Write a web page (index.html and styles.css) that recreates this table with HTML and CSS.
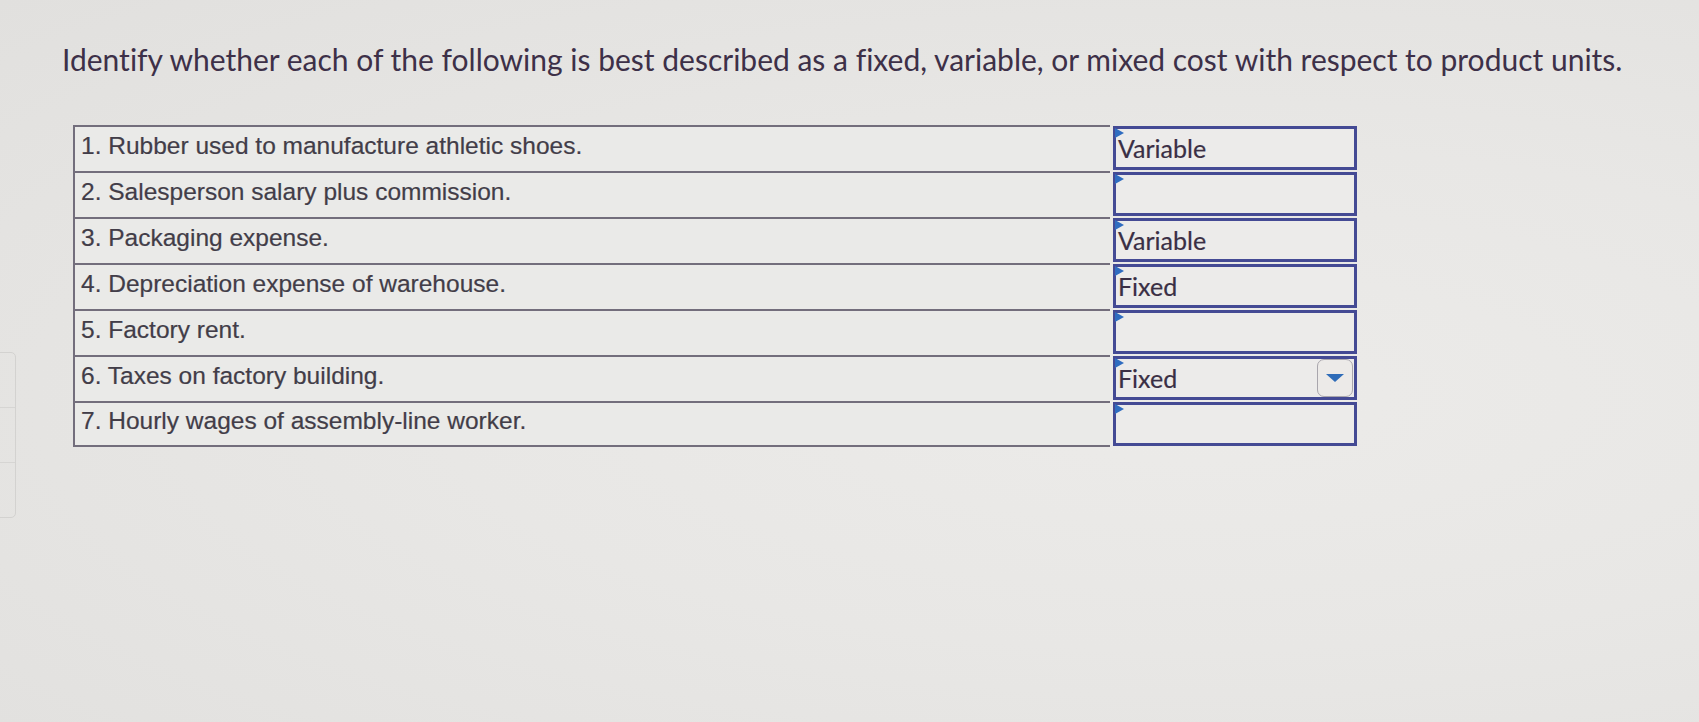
FILE: index.html
```html
<!DOCTYPE html>
<html lang="en">
<head>
<meta charset="utf-8">
<title>Cost behavior</title>
<link rel="stylesheet" href="styles.css">
</head>
<body>
<div class="edge-ghost">
  <div class="ghost-row"></div>
  <div class="ghost-row"></div>
  <div class="ghost-row"></div>
</div>
<main class="page">
  <p class="prompt">Identify whether each of the following is best described as a fixed, variable, or mixed cost with respect to product units.</p>
  <div class="grid">
    <div class="item">1. Rubber used to manufacture athletic shoes.</div>
    <div class="answer"><div class="box"><span class="flag"></span><span class="val">Variable</span></div></div>
    <div class="item">2. Salesperson salary plus commission.</div>
    <div class="answer"><div class="box"><span class="flag"></span><span class="val"></span></div></div>
    <div class="item">3. Packaging expense.</div>
    <div class="answer"><div class="box"><span class="flag"></span><span class="val">Variable</span></div></div>
    <div class="item">4. Depreciation expense of warehouse.</div>
    <div class="answer"><div class="box"><span class="flag"></span><span class="val">Fixed</span></div></div>
    <div class="item">5. Factory rent.</div>
    <div class="answer"><div class="box"><span class="flag"></span><span class="val"></span></div></div>
    <div class="item">6. Taxes on factory building.</div>
    <div class="answer"><div class="box"><span class="flag"></span><span class="val">Fixed</span><span class="drop"><svg width="20" height="10" viewBox="0 0 20 10"><path d="M1 1 L19 1 L10 9 Z" fill="#2f6cb8"/></svg></span></div></div>
    <div class="item last">7. Hourly wages of assembly-line worker.</div>
    <div class="answer"><div class="box"><span class="flag"></span><span class="val"></span></div></div>
  </div>
</main>
</body>
</html>
```

FILE: styles.css
```css
html, body {
  margin: 0;
  padding: 0;
}
body {
  width: 1699px;
  height: 722px;
  overflow: hidden;
  position: relative;
  background:
    radial-gradient(ellipse at 70% 55%, #ecebe9 0%, #e8e7e5 45%, #e1e0de 100%);
  color: #3a2f45;
  font-variant-ligatures: none;
}
.page {
  padding: 41px 0 0 62px;
}
.prompt {
  margin: 0;
  font-family: Lato, "Open Sans", sans-serif;
  font-size: 30px;
  line-height: 36px;
  color: #3d3048;
}
.grid {
  margin: 48px 0 0 11px;
  display: grid;
  grid-template-columns: 1037px 247px;
  grid-auto-rows: 46px;
  width: 1284px;
}
.item {
  border: 2px solid #736e7c;
  border-bottom: none;
  border-right: none;
  background: #eaeae8;
  font-family: "Liberation Sans", Arial, sans-serif;
  font-size: 24.5px;
  color: #423d48;
  display: flex;
  align-items: center;
  padding: 0 0 7px 6px;
  -webkit-text-stroke: 0.2px #423d48;
}
.item.last {
  border-bottom: 2px solid #736e7c;
}
.answer {
  padding: 1px 0 1px 3px;
  display: flex;
}
.box {
  flex: 1;
  position: relative;
  border: 3px solid #444a94;
  background: #ecebea;
  display: flex;
  align-items: center;
  padding: 0 0 1px 2px;
}
.val {
  font-family: Lato, "Open Sans", sans-serif;
  font-size: 25px;
  color: #3a2f45;
  flex: 1;
  -webkit-text-stroke: 0.2px #3a2f45;
}
.flag {
  position: absolute;
  left: -1px;
  top: -1px;
  width: 0;
  height: 0;
  border-top: 5px solid transparent;
  border-bottom: 5px solid transparent;
  border-left: 9px solid #2f6cc0;
}
.drop {
  width: 34px;
  height: 36px;
  margin-right: 1px;
  border: 1px solid #a9a6ad;
  border-radius: 7px;
  display: flex;
  align-items: center;
  justify-content: center;
  background: #eceae8;
}
.edge-ghost {
  position: absolute;
  left: -6px;
  top: 352px;
  width: 20px;
  height: 164px;
  border: 1px solid #d3d2d0;
  border-radius: 5px;
  display: flex;
  flex-direction: column;
}
.ghost-row {
  flex: 1;
  border-bottom: 1px solid #d6d5d3;
}
.ghost-row:last-child {
  border-bottom: none;
}
```
